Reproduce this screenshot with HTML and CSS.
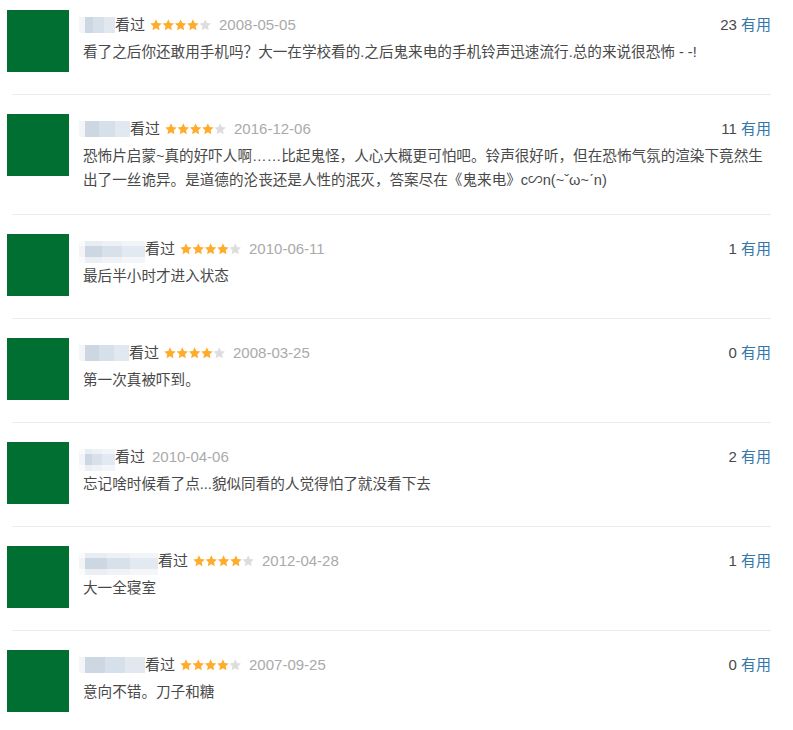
FILE: index.html
```html
<!DOCTYPE html>
<html lang="zh-CN">
<head>
    <meta charset="UTF-8">
    <title>短评</title>
    <link rel="stylesheet" href="styles.css">
</head>
<body>
<div class="comments">

    <div class="comment">
        <div class="avatar"></div>
        <div class="body">
            <div class="meta">
                <span class="name" style="width: 36px"></span><span class="watched">看过</span>
                <svg class="stars" viewBox="0 0 62 12"><use href="#s" x="0" fill="#ffac2d"/><use href="#s" x="12.3" fill="#ffac2d"/><use href="#s" x="24.6" fill="#ffac2d"/><use href="#s" x="36.9" fill="#ffac2d"/><use href="#s" x="49.2" fill="#ddd"/></svg>
                <span class="date">2008-05-05</span>
                <span class="votes"><span class="count">23</span> <a href="#">有用</a></span>
            </div>
            <p class="text">看了之后你还敢用手机吗？大一在学校看的.之后鬼来电的手机铃声迅速流行.总的来说很恐怖 - -!</p>
        </div>
    </div>

    <div class="comment">
        <div class="avatar"></div>
        <div class="body">
            <div class="meta">
                <span class="name" style="width: 51px"></span><span class="watched">看过</span>
                <svg class="stars" viewBox="0 0 62 12"><use href="#s" x="0" fill="#ffac2d"/><use href="#s" x="12.3" fill="#ffac2d"/><use href="#s" x="24.6" fill="#ffac2d"/><use href="#s" x="36.9" fill="#ffac2d"/><use href="#s" x="49.2" fill="#ddd"/></svg>
                <span class="date">2016-12-06</span>
                <span class="votes"><span class="count">11</span> <a href="#">有用</a></span>
            </div>
            <p class="text">恐怖片启蒙~真的好吓人啊……比起鬼怪，人心大概更可怕吧。铃声很好听，但在恐怖气氛的渲染下竟然生出了一丝诡异。是道德的沦丧还是人性的泯灭，答案尽在《鬼来电》c∽n(~ˇω~ˊn)</p>
        </div>
    </div>

    <div class="comment">
        <div class="avatar"></div>
        <div class="body">
            <div class="meta">
                <span class="name tall" style="width: 66px"></span><span class="watched">看过</span>
                <svg class="stars" viewBox="0 0 62 12"><use href="#s" x="0" fill="#ffac2d"/><use href="#s" x="12.3" fill="#ffac2d"/><use href="#s" x="24.6" fill="#ffac2d"/><use href="#s" x="36.9" fill="#ffac2d"/><use href="#s" x="49.2" fill="#ddd"/></svg>
                <span class="date">2010-06-11</span>
                <span class="votes"><span class="count">1</span> <a href="#">有用</a></span>
            </div>
            <p class="text">最后半小时才进入状态</p>
        </div>
    </div>

    <div class="comment">
        <div class="avatar"></div>
        <div class="body">
            <div class="meta">
                <span class="name" style="width: 50px"></span><span class="watched">看过</span>
                <svg class="stars" viewBox="0 0 62 12"><use href="#s" x="0" fill="#ffac2d"/><use href="#s" x="12.3" fill="#ffac2d"/><use href="#s" x="24.6" fill="#ffac2d"/><use href="#s" x="36.9" fill="#ffac2d"/><use href="#s" x="49.2" fill="#ddd"/></svg>
                <span class="date">2008-03-25</span>
                <span class="votes"><span class="count">0</span> <a href="#">有用</a></span>
            </div>
            <p class="text">第一次真被吓到。</p>
        </div>
    </div>

    <div class="comment">
        <div class="avatar"></div>
        <div class="body">
            <div class="meta">
                <span class="name tall" style="width: 36px"></span><span class="watched">看过</span>
                <span class="date">2010-04-06</span>
                <span class="votes"><span class="count">2</span> <a href="#">有用</a></span>
            </div>
            <p class="text">忘记啥时候看了点...貌似同看的人觉得怕了就没看下去</p>
        </div>
    </div>

    <div class="comment">
        <div class="avatar"></div>
        <div class="body">
            <div class="meta">
                <span class="name tall" style="width: 79px"></span><span class="watched">看过</span>
                <svg class="stars" viewBox="0 0 62 12"><use href="#s" x="0" fill="#ffac2d"/><use href="#s" x="12.3" fill="#ffac2d"/><use href="#s" x="24.6" fill="#ffac2d"/><use href="#s" x="36.9" fill="#ffac2d"/><use href="#s" x="49.2" fill="#ddd"/></svg>
                <span class="date">2012-04-28</span>
                <span class="votes"><span class="count">1</span> <a href="#">有用</a></span>
            </div>
            <p class="text">大一全寝室</p>
        </div>
    </div>

    <div class="comment">
        <div class="avatar"></div>
        <div class="body">
            <div class="meta">
                <span class="name" style="width: 66px"></span><span class="watched">看过</span>
                <svg class="stars" viewBox="0 0 62 12"><use href="#s" x="0" fill="#ffac2d"/><use href="#s" x="12.3" fill="#ffac2d"/><use href="#s" x="24.6" fill="#ffac2d"/><use href="#s" x="36.9" fill="#ffac2d"/><use href="#s" x="49.2" fill="#ddd"/></svg>
                <span class="date">2007-09-25</span>
                <span class="votes"><span class="count">0</span> <a href="#">有用</a></span>
            </div>
            <p class="text">意向不错。刀子和糖</p>
        </div>
    </div>

</div>

<!-- shared star shape -->
<svg class="defs" width="0" height="0">
    <defs>
        <polygon id="s" points="6,0.3 7.7,3.95 11.71,4.45 8.76,7.2 9.53,11.15 6,9.2 2.47,11.15 3.24,7.2 0.29,4.45 4.3,3.95"/>
    </defs>
</svg>
</body>
</html>
```

FILE: styles.css
```css
body {
    margin: 0;
    font-family: "Liberation Sans", "Noto Sans CJK SC", sans-serif;
    font-size: 15px;
    color: #494949;
    background: #fff;
}
.comments {
    margin: 0 22px 0 12px;
}
.comment {
    display: flex;
    align-items: flex-start;
    padding: 19px 0 22px;
    border-bottom: 1px solid #ececec;
}
.comment:first-child {
    padding-top: 10px;
}
.avatar {
    flex: none;
    width: 62px;
    height: 62px;
    margin-left: -5px;
    margin-right: 14px;
    background-color: #006f31;
}
.body {
    flex: 1;
    min-width: 0;
}
.meta {
    display: flex;
    align-items: center;
    height: 24px;
    margin-top: 3px;
    line-height: 24px;
}
.name {
    display: inline-block;
    height: 16px;
    margin-left: -4px;
    background:
        linear-gradient(90deg, #f4f5f7 0 6px, #cdd7e1 6px 40%, #d6e0ea 40% 70%, #e2e8ef 70% 100%);
}
.name.tall {
    height: 22px;
    margin-top: 6px;
    background:
        linear-gradient(180deg, rgba(255,255,255,0.55) 0 5px, transparent 5px 16px, rgba(255,255,255,0.6) 16px),
        linear-gradient(90deg, #f2f4f7 0 6px, #cdd7e1 6px 35%, #d8e1ea 35% 65%, #e3e9f0 65% 100%);
}
.watched {
    color: #494949;
}
.stars {
    width: 62px;
    height: 12px;
    margin-left: 5px;
}
.defs {
    position: absolute;
}
.date {
    margin-left: 7px;
    color: #aaa;
}
.votes {
    margin-left: auto;
}
.count {
    color: #494949;
}
.votes a {
    color: #3377aa;
    text-decoration: none;
}
.text {
    margin: 3px -6px 0 0;
    font-size: 14.6px;
    line-height: 24px;
    color: #494949;
}
```
